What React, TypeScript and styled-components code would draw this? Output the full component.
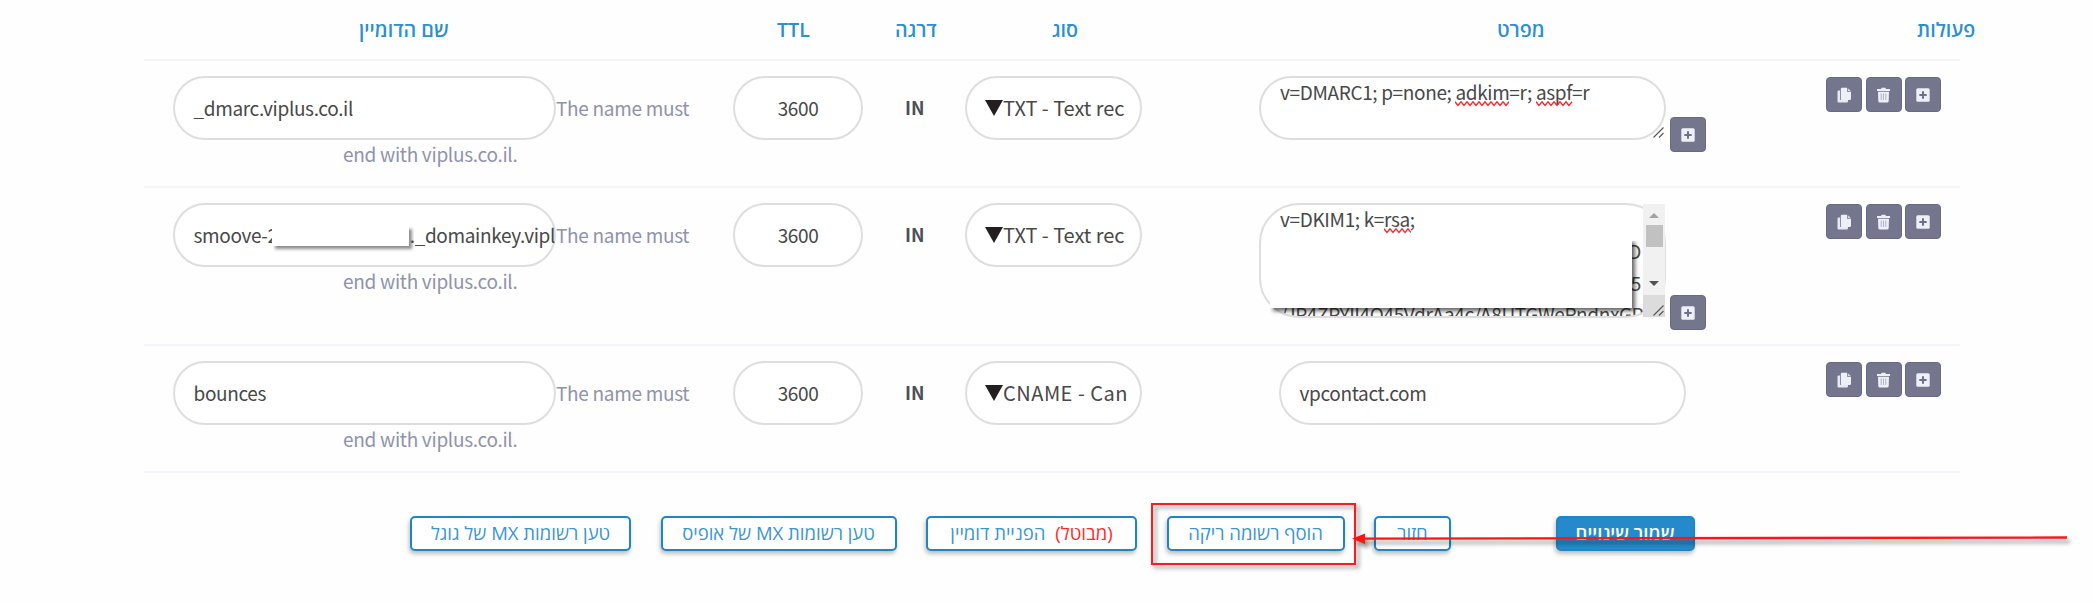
import React from 'react';
import styled, { createGlobalStyle } from 'styled-components';

const latin = "'Noto Sans CJK SC', 'Open Sans', sans-serif";
const hebrew = "'Open Sans', 'Noto Sans', sans-serif";

const GlobalStyle = createGlobalStyle`
  * { box-sizing: border-box; }
  body { margin: 0; background: #fff; overflow: hidden; }
`;

const Page = styled.main`
  position: relative;
  width: 2095px;
  height: 603px;
  background: #fefefe;
  font-family: ${latin};
  font-size: 19px;
  letter-spacing: -0.36px;
  color: #484848;
  white-space: nowrap;
`;

const Table = styled.section`
  width: 1816px;
  margin-left: 144px;
`;

const HeaderRow = styled.header`
  display: grid;
  grid-template-columns: 418px 118px 157px 445px 420px 60px;
  height: 61px;
  padding-left: 215px;
  border-bottom: 2px solid #f3f4fa;
`;

const HeaderCell = styled.div`
  padding-top: 14px;
  font-family: ${hebrew};
  font-size: 19.7px;
  font-weight: 600;
  line-height: 32px;
  letter-spacing: 0;
  color: #2b8fd0;
`;

const Row = styled.div<{ $height: number }>`
  display: grid;
  grid-template-columns: 560px 172px 60px 294px 567px 120px;
  align-items: start;
  height: ${p => p.$height}px;
  padding: 15px 0 0 29px;
  border-bottom: 2px solid #f3f5fb;
`;

const NameLine = styled.div`
  display: flex;
  align-items: center;
`;

const Field = styled.div<{ $width: number; $center?: boolean; $indent?: number }>`
  display: flex;
  align-items: center;
  justify-content: ${p => (p.$center ? 'center' : 'flex-start')};
  width: ${p => p.$width}px;
  height: 64px;
  margin-left: ${p => p.$indent ?? 0}px;
  padding: 0 0 1px ${p => (p.$center ? 0 : 18.5)}px;
  border: 2px solid #dedede;
  border-radius: 32px;
  background: #fff;
`;

const Hint = styled.div<{ $second?: boolean }>`
  padding-left: ${p => (p.$second ? 170 : 0)}px;
  padding-bottom: ${p => (p.$second ? 0 : 1)}px;
  line-height: 28px;
  letter-spacing: -0.3px;
  color: #8f93ab;
`;

const Redaction = styled.span`
  position: relative;
  flex: none;
  width: 137px;
  height: 20px;
  margin: 3px 1px 0 -6px;
  background: #fff;
  box-shadow: 3px 3px 3px rgba(0, 0, 0, 0.45);
`;

const NameTail = styled.span`
  position: relative;
`;

const ClassName = styled.div`
  font-size: 18px;
  font-weight: 700;
  line-height: 62px;
  letter-spacing: 0;
  color: #4b5058;
`;

const Select = styled.div`
  display: flex;
  align-items: center;
  width: 177px;
  height: 64px;
  padding: 0 14px 1px 18px;
  border: 2px solid #dedede;
  border-radius: 32px;
  background: #fff;
  font-size: 20px;
`;

const SelectText = styled.span<{ $spacing: number }>`
  flex: 1;
  letter-spacing: ${p => p.$spacing}px;
`;

const Triangle = styled.span`
  flex: none;
  width: 0;
  height: 0;
  margin-top: 1px;
  border: 9.5px solid transparent;
  border-top: 16px solid #231f20;
  border-bottom: 0;
`;

const ValueCell = styled.div`
  display: flex;
  align-items: flex-end;
  gap: 4px;
`;

const TextArea = styled.div<{ $height: number }>`
  position: relative;
  width: 407px;
  height: ${p => p.$height}px;
`;

const TextAreaBody = styled.div<{ $radius: number }>`
  height: 100%;
  padding: 0 23px 0 19px;
  overflow: hidden;
  border: 2px solid #dedede;
  border-radius: ${p => p.$radius}px;
  background: #fff;
`;

const TextLine = styled.div<{ $end?: boolean; $first?: boolean }>`
  height: ${p => (p.$first ? 30 : 31.6)}px;
  line-height: ${p => (p.$first ? 28.5 : 31)}px;
  text-align: ${p => (p.$end ? 'right' : 'left')};
`;

const TextMask = styled.div`
  position: absolute;
  left: 11px;
  top: 36px;
  width: 362px;
  height: 69px;
  background: #fff;
  box-shadow: 3px 3px 4px rgba(0, 0, 0, 0.6);
  clip-path: inset(2px -10px -10px 0);
`;

const ScrollBar = styled.div`
  position: absolute;
  right: 1px;
  top: 1px;
  display: flex;
  flex-direction: column;
  align-items: center;
  width: 22px;
  height: 113px;
  background: linear-gradient(#f1f1f1 91px, #dcdcdc 91px);
`;

const ScrollThumb = styled.div`
  width: 17px;
  height: 22px;
  margin: 7px 0 34px;
  background: #c1c1c1;
`;

const ScrollArrow = styled.div<{ $down?: boolean }>`
  width: 0;
  height: 0;
  margin-top: ${p => (p.$down ? 0 : 9)}px;
  border: 5px solid transparent;
  ${p => (p.$down ? 'border-top-color: #505050; border-bottom: 0;' : 'border-bottom-color: #a3a3a3; border-top: 0;')}
`;

const GripSvg = styled.svg`
  position: absolute;
  right: 2px;
  bottom: 2px;
`;

const Misspelled = styled.span`
  position: relative;
`;

const WaveSvg = styled.svg`
  position: absolute;
  left: 0;
  top: 23px;
`;

const IconButton = styled.button`
  display: grid;
  place-items: center;
  width: 36px;
  height: 35px;
  padding: 0;
  border: 1px solid #676a85;
  border-radius: 4px;
  background: #73768c;
`;

const AddLine = styled(IconButton)`
  margin-bottom: -12px;
`;

const Actions = styled.div`
  display: flex;
  gap: 3.5px;
  margin-top: 1px;
`;

const Footer = styled.footer`
  display: flex;
  gap: 29.5px;
  padding: 43px 0 0 410px;
`;

const Button = styled.button<{ $width: number; $primary?: boolean }>`
  display: flex;
  align-items: center;
  justify-content: center;
  gap: 10px;
  width: ${p => p.$width}px;
  height: 35px;
  margin-left: ${p => (p.$primary ? 75 : 0)}px;
  padding: 0 0 2px;
  border: 2px solid #1b86c9;
  border-radius: 5px;
  background: ${p => (p.$primary ? '#258acb' : '#fff')};
  box-shadow: -1px 3px 4px rgba(0, 0, 0, 0.25);
  color: ${p => (p.$primary ? '#fff' : '#3b95cf')};
  font-family: ${hebrew};
  font-size: 18.5px;
  font-weight: ${p => (p.$primary ? 600 : 400)};
  white-space: nowrap;
`;

const Disabled = styled.span`
  color: #ff2a2a;
`;

const Highlight = styled.div`
  position: absolute;
  left: 1151px;
  top: 503px;
  width: 205px;
  height: 62px;
  border: 2px solid #fb1d1d;
  filter: drop-shadow(3px 3px 2px rgba(0, 0, 0, 0.45));
`;

const ArrowSvg = styled.svg`
  position: absolute;
  left: 1345px;
  top: 520px;
  filter: drop-shadow(3px 4px 2px rgba(0, 0, 0, 0.45));
`;

const CopyIcon = () => (
  <svg width="15" height="16" viewBox="0 0 15 16" fill="#eef0f8">
    <path d="M1.8 3.5H3v9.2h8v1.5a1.3 1.3 0 0 1-1.3 1.3H1.8A1.3 1.3 0 0 1 .5 14.2V4.8A1.3 1.3 0 0 1 1.8 3.5z" opacity=".95" />
    <path d="M5 .8h5v3.9h4v7a1.2 1.2 0 0 1-1.2 1.2H5a1.2 1.2 0 0 1-1.2-1.2V2A1.2 1.2 0 0 1 5 .8z" />
    <path d="M10.7.9l3.2 3.1h-3.2z" opacity=".8" />
  </svg>
);

const TrashIcon = () => (
  <svg width="15" height="16" viewBox="0 0 15 16" fill="#eef0f8">
    <path d="M1 2h4l.7-1.2h3.6L10 2h4v1.9H1z" />
    <path d="M2 4.7h11l-.3 9.3a1.6 1.6 0 0 1-1.6 1.5H3.900A1.6 1.6 0 0 1 2.300 14z" />
    <path d="M5.2 6.500v6.500M7.500 6.500v6.500M9.800 6.500v6.500" stroke="#a9acbf" strokeWidth=".9" />
  </svg>
);

const PlusIcon = () => (
  <svg width="14" height="14" viewBox="0 0 14 14">
    <rect x=".3" y=".3" width="13.4" height="13.4" rx="1.5" fill="#eef0f8" />
    <path d="M7 3.300v7.400M3.300 7h7.400" stroke="#6d708a" strokeWidth="2" />
  </svg>
);

const Grip = () => (
  <GripSvg width="11" height="11" viewBox="0 0 11 11" stroke="#555" strokeWidth="1.1">
    <path d="M.5 10.500L10.500.500M6 10.500l4.500-4.500" />
  </GripSvg>
);

function Spell({ width, children }: { width: number; children: string }) {
  const points: string[] = [];
  for (let i = 0; i * 3 <= width; i++) points.push(`${i * 3},${i % 2 ? 4.5 : 0.8}`);
  return (
    <Misspelled>
      {children}
      <WaveSvg width={width} height="6" fill="none" stroke="#fb2b2b" strokeWidth="1.4">
        <polyline points={points.join(' ')} />
      </WaveSvg>
    </Misspelled>
  );
}

interface RecordProps {
  height: number;
  name: React.ReactNode;
  type: string;
  typeSpacing?: number;
  children: React.ReactNode;
}

function DnsRecord({ height, name, type, typeSpacing = -0.05, children }: RecordProps) {
  return (
    <Row $height={height}>
      <div>
        <NameLine>
          <Field $width={383}>{name}</Field>
          <Hint>The name must</Hint>
        </NameLine>
        <Hint $second>end with viplus.co.il.</Hint>
      </div>
      <Field $width={130} $center>3600</Field>
      <ClassName>IN</ClassName>
      <Select>
        <Triangle />
        <SelectText $spacing={typeSpacing}>{type}</SelectText>
      </Select>
      <ValueCell>{children}</ValueCell>
      <Actions>
        <IconButton><CopyIcon /></IconButton>
        <IconButton><TrashIcon /></IconButton>
        <IconButton><PlusIcon /></IconButton>
      </Actions>
    </Row>
  );
}

export default function App() {
  return (
    <Page>
      <GlobalStyle />
      <Table>
        <HeaderRow>
          <HeaderCell>שם הדומיין</HeaderCell>
          <HeaderCell>TTL</HeaderCell>
          <HeaderCell>דרגה</HeaderCell>
          <HeaderCell>סוג</HeaderCell>
          <HeaderCell>מפרט</HeaderCell>
          <HeaderCell>פעולות</HeaderCell>
        </HeaderRow>
        <DnsRecord height={127} name="_dmarc.viplus.co.il" type="TXT - Text rec">
          <TextArea $height={64}>
            <TextAreaBody $radius={32}>
              <TextLine $first>
                v=DMARC1; p=none; <Spell width={54}>adkim</Spell>=r; <Spell width={37}>aspf</Spell>=r
              </TextLine>
            </TextAreaBody>
            <Grip />
          </TextArea>
          <AddLine><PlusIcon /></AddLine>
        </DnsRecord>
        <DnsRecord
          height={158}
          name={<><span>smoove-2</span><Redaction /><NameTail>._domainkey.vipl</NameTail></>}
          type="TXT - Text rec"
        >
          <TextArea $height={115}>
            <TextAreaBody $radius={40}>
              <TextLine $first>v=DKIM1; k=<Spell width={27}>rsa</Spell>;</TextLine>
              <TextLine $end>D</TextLine>
              <TextLine $end>5</TextLine>
              <TextLine $end>/JP4ZPYIl4O45VdrAa4c/A8UTGWeRndnxGP</TextLine>
            </TextAreaBody>
            <TextMask />
            <ScrollBar>
              <ScrollArrow />
              <ScrollThumb />
              <ScrollArrow $down />
            </ScrollBar>
            <Grip />
          </TextArea>
          <AddLine><PlusIcon /></AddLine>
        </DnsRecord>
        <DnsRecord height={127} name="bounces" type="CNAME - Can" typeSpacing={0.5}>
          <Field $width={407} $indent={20}>vpcontact.com</Field>
        </DnsRecord>
      </Table>
      <Footer>
        <Button $width={221} dir="rtl">טען רשומות MX של גוגל</Button>
        <Button $width={236} dir="rtl">טען רשומות MX של אופיס</Button>
        <Button $width={211} dir="rtl"><Disabled>(מבוטל)</Disabled><span>הפניית דומיין</span></Button>
        <Button $width={178} dir="rtl">הוסף רשומה ריקה</Button>
        <Button $width={77} dir="rtl">חזור</Button>
        <Button $width={139} $primary dir="rtl">שמור שינויים</Button>
      </Footer>
      <Highlight />
      <ArrowSvg width="730" height="36" viewBox="0 0 730 36">
        <path d="M18 18.700L722 17.500" stroke="#fb1616" strokeWidth="2.300" />
        <path d="M7 18.700L20 13.500V24z" fill="#fb1616" />
      </ArrowSvg>
    </Page>
  );
}
